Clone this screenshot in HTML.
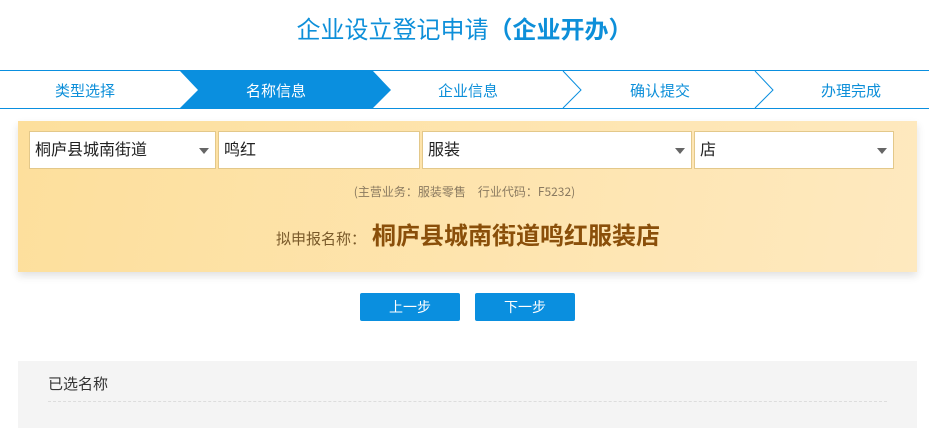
<!DOCTYPE html>
<html><head><meta charset="utf-8"><style>
body{margin:0;width:929px;height:428px;background:#fff;font-family:"Liberation Sans","Noto Sans CJK SC",sans-serif;position:relative;overflow:hidden}
.a{position:absolute}
.title{left:0;width:929px;top:10px;text-align:center;font-size:24px;color:#0d8fd9}
.panel{left:18px;top:121px;width:899px;height:151px;background:linear-gradient(100deg,#fddf9c,#fee9bf);box-shadow:0 4px 8px rgba(0,0,0,.12)}
.box{top:131px;height:38px;background:#fff;border:1px solid #e3c88a;box-sizing:border-box;font-size:16px;line-height:38px;padding-left:5px;color:#222}
.tri{position:absolute;right:6px;top:16px;border-left:5px solid transparent;border-right:5px solid transparent;border-top:6px solid #666}
.btn{top:293px;width:100px;height:28px;background:#0a8fdf;color:#fff;font-size:14px;text-align:center;line-height:28px;border-radius:2px}
</style></head><body>
<div class="a title">企业设立登记申请<b>（企业开办）</b></div>
<svg class="a" style="left:0;top:0" width="929" height="120">
<polygon points="180,71 373,71 391,90 373,108 180,108 198,90" fill="#0a8fdf"/>
<line x1="0" y1="70.5" x2="929" y2="70.5" stroke="#0a8fdf"/>
<line x1="0" y1="108.5" x2="929" y2="108.5" stroke="#0a8fdf"/>
<polyline points="563,71 581,90 563,108" fill="none" stroke="#0a8fdf"/>
<polyline points="755,71 773,90 755,108" fill="none" stroke="#0a8fdf"/>
<g font-size="15" text-anchor="middle" fill="#0d8fd9" font-family="Liberation Sans,Noto Sans CJK SC,sans-serif">
<text x="85" y="96">类型选择</text>
<text x="276" y="96" fill="#fff">名称信息</text>
<text x="468" y="96">企业信息</text>
<text x="660" y="96">确认提交</text>
<text x="851" y="96">办理完成</text>
</g></svg>
<div class="a panel"></div>
<div class="a box" style="left:29px;width:187px">桐庐县城南街道<span class="tri"></span></div>
<div class="a box" style="left:218px;width:202px">鸣红</div>
<div class="a box" style="left:422px;width:270px">服装<span class="tri"></span></div>
<div class="a box" style="left:694px;width:200px">店<span class="tri"></span></div>
<div class="a" style="left:0;width:929px;top:184px;text-align:center;font-size:12px;color:#8a7a60;font-family:'Noto Sans CJK SC',sans-serif;line-height:16px">(主营业务：服装零售　行业代码：F5232)</div>
<div class="a" style="left:276px;top:218px;font-size:15px;color:#7a5a2a;line-height:32px;font-family:'Noto Sans CJK SC',sans-serif;white-space:nowrap">拟申报名称：<b style="font-size:24px;color:#8a4f0a;position:relative;left:6px">桐庐县城南街道鸣红服装店</b></div>
<div class="a btn" style="left:360px">上一步</div>
<div class="a btn" style="left:475px">下一步</div>
<div class="a" style="left:18px;top:361px;width:899px;height:67px;background:#f4f4f4"></div>
<div class="a" style="left:48px;top:373px;font-size:15px;color:#333">已选名称</div>
<div class="a" style="left:48px;top:401px;width:839px;border-top:1px dashed #ddd"></div>
</body></html>
